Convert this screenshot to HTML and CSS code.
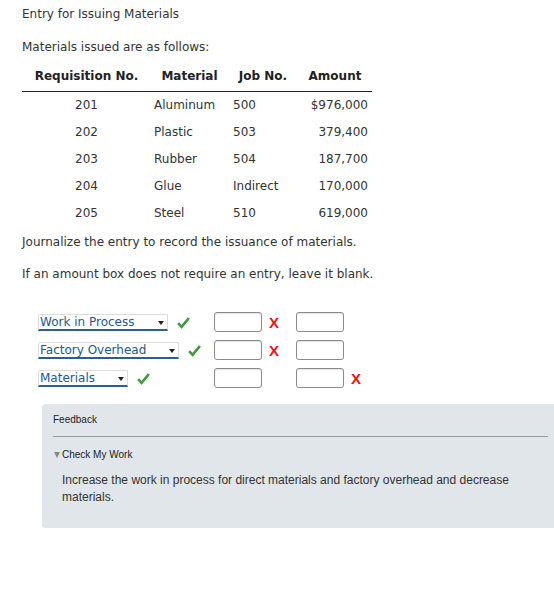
FILE: index.html
```html
<!DOCTYPE html>
<html>
<head>
<meta charset="utf-8">
<link rel="stylesheet" href="styles.css">
</head>
<body>
<div class="page">
  <p class="title">Entry for Issuing Materials</p>
  <p class="intro">Materials issued are as follows:</p>
  <div class="table">
    <div class="th">Requisition No.</div>
    <div class="th">Material</div>
    <div class="th">Job No.</div>
    <div class="th">Amount</div>
    <div class="rule"></div>
    <div class="td c">201</div><div class="td m">Aluminum</div><div class="td j">500</div><div class="td a">$976,000</div>
    <div class="td c">202</div><div class="td m">Plastic</div><div class="td j">503</div><div class="td a">379,400</div>
    <div class="td c">203</div><div class="td m">Rubber</div><div class="td j">504</div><div class="td a">187,700</div>
    <div class="td c">204</div><div class="td m">Glue</div><div class="td j">Indirect</div><div class="td a">170,000</div>
    <div class="td c">205</div><div class="td m">Steel</div><div class="td j">510</div><div class="td a">619,000</div>
  </div>
  <p class="instr first">Journalize the entry to record the issuance of materials.</p>
  <p class="instr second">If an amount box does not require an entry, leave it blank.</p>

  <div class="journal">
    <div class="jrow">
      <div class="acct">
        <span class="sel w1">Work in Process<span class="arrow"></span></span>
        <svg class="check" viewBox="0 0 12 12" width="13" height="13"><path d="M1 6.5 L4.3 10 L11 1.8" fill="none" stroke="#3c9a3c" stroke-width="2.4"/></svg>
      </div>
      <span class="box"></span><span class="mark"><span class="x">X</span></span>
      <span class="box"></span><span class="mark"></span>
    </div>
    <div class="jrow">
      <div class="acct">
        <span class="sel w2">Factory Overhead<span class="arrow"></span></span>
        <svg class="check" viewBox="0 0 12 12" width="13" height="13"><path d="M1 6.5 L4.3 10 L11 1.8" fill="none" stroke="#3c9a3c" stroke-width="2.4"/></svg>
      </div>
      <span class="box"></span><span class="mark"><span class="x">X</span></span>
      <span class="box"></span><span class="mark"></span>
    </div>
    <div class="jrow">
      <div class="acct">
        <span class="sel w3">Materials<span class="arrow"></span></span>
        <svg class="check" viewBox="0 0 12 12" width="13" height="13"><path d="M1 6.5 L4.3 10 L11 1.8" fill="none" stroke="#3c9a3c" stroke-width="2.4"/></svg>
      </div>
      <span class="box"></span><span class="mark"></span>
      <span class="box"></span><span class="mark"><span class="x">X</span></span>
    </div>
  </div>

  <div class="feedback">
    <div class="fb-title">Feedback</div>
    <div class="fb-check"><span class="tri"></span>Check My Work</div>
    <p class="fb-text">Increase the work in process for direct materials and factory overhead and decrease materials.</p>
  </div>
</div>
</body>
</html>
```

FILE: styles.css
```css
html, body {
  margin: 0;
  padding: 0;
  background: #fff;
}
.page {
  padding: 6px 0 0 22px;
  font-family: Verdana, "DejaVu Sans", sans-serif;
  font-size: 12px;
  color: #333;
}
p { margin: 0; }
.title {
  line-height: 16px;
}
.intro {
  line-height: 16px;
  margin-top: 17px;
}
.table {
  display: grid;
  grid-template-columns: 129px 77px 70px 74px;
  margin-top: 13px;
  width: 350px;
}
.th {
  font-weight: bold;
  color: #222;
  text-align: center;
  line-height: 16px;
  padding-bottom: 7px;
}
.rule {
  grid-column: 1 / -1;
  height: 0;
  border-top: 1px solid #222;
}
.td {
  line-height: 27px;
}
.td.c { text-align: center; }
.td.m { padding-left: 3px; }
.td.j { padding-left: 5px; }
.td.a { text-align: right; padding-right: 4px; }
.instr {
  line-height: 16px;
}
.instr.first { margin-top: 7px; }
.instr.second { margin-top: 16px; }

.journal {
  margin-top: 30px;
  padding-left: 16px;
  display: flex;
  flex-direction: column;
  gap: 8px;
}
.jrow {
  display: flex;
  align-items: center;
  height: 20px;
}
.acct {
  width: 176px;
  display: flex;
  align-items: center;
  gap: 9px;
}
.sel {
  position: relative;
  box-sizing: border-box;
  height: 17px;
  line-height: 15px;
  padding-left: 1px;
  color: #22598c;
  background: #fff;
  border: 1px solid #dcdcdc;
  border-bottom: 2px solid #2a5f8f;
  border-radius: 2px 2px 0 0;
  white-space: nowrap;
}
.w1 { width: 130px; }
.w2 { width: 141px; }
.w3 { width: 90px; }
.arrow {
  position: absolute;
  right: 3px;
  top: 6px;
  width: 0;
  height: 0;
  border-left: 3px solid transparent;
  border-right: 3px solid transparent;
  border-top: 4px solid #222;
}
.check { display: block; }
.box {
  box-sizing: border-box;
  width: 48px;
  height: 20px;
  border: 1px solid #8a8a8a;
  border-radius: 3px;
  background: #fff;
  box-shadow: inset 0 1px 1px rgba(0,0,0,0.12);
}
.mark {
  width: 34px;
  box-sizing: border-box;
  padding-left: 7px;
  display: flex;
  justify-content: flex-start;
}
.x {
  font-family: "Liberation Sans", Arial, sans-serif;
  font-weight: bold;
  font-size: 15px;
  line-height: 15px;
  color: #ee1111;
}

.feedback {
  margin-top: 16px;
  margin-left: 20px;
  background: #e0e6ea;
  border-radius: 4px 0 0 4px;
  height: 124px;
  box-sizing: border-box;
  padding: 9px 6px 0 11px;
  font-family: "Liberation Sans", Arial, sans-serif;
  color: #222;
}
.fb-title {
  font-size: 10px;
  line-height: 14px;
  padding-bottom: 9px;
  border-bottom: 1px solid #9a9a9a;
}
.fb-check {
  margin-top: 11px;
  font-size: 10px;
  line-height: 14px;
  display: flex;
  align-items: center;
}
.tri {
  display: inline-block;
  width: 0;
  height: 0;
  margin: 0 2px 0 1px;
  border-left: 3px solid transparent;
  border-right: 3px solid transparent;
  border-top: 6px solid #888;
}
.fb-text {
  margin-top: 10px;
  padding-left: 9px;
  font-size: 12px;
  line-height: 17px;
  color: #333;
}
```
